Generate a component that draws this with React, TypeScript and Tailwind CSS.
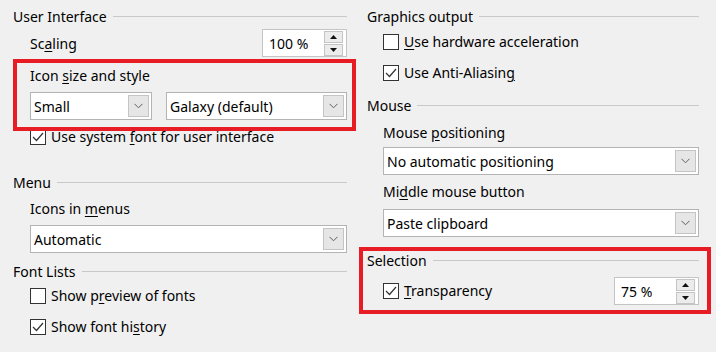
import type { ReactNode } from 'react'

const font = { fontFamily: '"Noto Sans", "Open Sans", sans-serif' }

function Heading({ children, className = '' }: { children: ReactNode; className?: string }) {
  return (
    <div className={`flex items-center h-5 gap-[6px] ${className}`}>
      <span className="text-[14px] text-black leading-5 whitespace-nowrap">{children}</span>
      <div className="flex-1 h-px bg-[#c9c9c9] mt-[-1px]" />
    </div>
  )
}

function Label({ children, className = '' }: { children: ReactNode; className?: string }) {
  return <div className={`h-5 leading-5 text-[14px] text-black ${className}`}>{children}</div>
}

function U({ children }: { children: ReactNode }) {
  return <span className="underline underline-offset-2">{children}</span>
}

function Chevron() {
  return (
    <svg width="9" height="6" viewBox="0 0 9 6" fill="none">
      <path d="M0.5 0.8 L4.5 4.8 L8.5 0.8" stroke="#5f5f5f" strokeWidth="1" />
    </svg>
  )
}

function Select({ value, className = '' }: { value: string; className?: string }) {
  return (
    <div className={`flex items-center h-7 bg-white border border-[#b4b4b4] pl-[3px] pr-[2px] ${className}`}>
      <span className="flex-1 text-[14px] text-black whitespace-nowrap">{value}</span>
      <div className="w-[21px] h-[22px] bg-[#e6e6e6] border border-[#c4c4c4] flex items-center justify-center">
        <Chevron />
      </div>
    </div>
  )
}

function Spin({ value, className = '' }: { value: string; className?: string }) {
  return (
    <div className={`flex items-center h-7 bg-white border border-[#c4c4c4] pl-[6px] pr-[3px] ${className}`}>
      <span className="flex-1 text-[14px] text-black">{value}</span>
      <div className="flex flex-col w-[19px] h-[25px] gap-px">
        <div className="flex-1 bg-[#ececec] border border-[#c4c4c4] flex items-center justify-center">
          <svg width="7" height="4" viewBox="0 0 7 4">
            <path d="M3.5 0 L7 4 L0 4 Z" fill="#111" />
          </svg>
        </div>
        <div className="flex-1 bg-[#ececec] border border-[#c4c4c4] flex items-center justify-center">
          <svg width="7" height="4" viewBox="0 0 7 4">
            <path d="M0 0 L7 0 L3.5 4 Z" fill="#111" />
          </svg>
        </div>
      </div>
    </div>
  )
}

function Check({ checked, children, className = '' }: { checked?: boolean; children: ReactNode; className?: string }) {
  return (
    <div className={`flex items-center h-4 gap-[5px] ${className}`}>
      <div className="w-4 h-4 bg-white border border-[#333] flex items-center justify-center shrink-0">
        {checked && (
          <svg width="12" height="10" viewBox="0 0 12 10" fill="none">
            <path d="M1 5 L4.5 8.5 L11 1" stroke="#333" strokeWidth="1.2" />
          </svg>
        )}
      </div>
      <span className="text-[14px] text-black leading-5 whitespace-nowrap">{children}</span>
    </div>
  )
}

export default function App() {
  return (
    <div className="relative w-[716px] h-[352px] bg-[#f0f0f0] overflow-hidden flex" style={font}>
      {/* Left column */}
      <div className="w-[356px] pl-[13px] pr-[9px] pt-[7px] flex flex-col">
        <Heading>User Interface</Heading>
        <div className="ml-[17px] mt-[2px] flex items-center h-7">
          <span className="flex-1 text-[14px] text-black">Sc<U>a</U>ling</span>
          <Spin value="100 %" className="w-[85px]" />
        </div>
        <Label className="ml-[17px] mt-[9px]">Icon <U>s</U>ize and style</Label>
        <div className="ml-[17px] mt-[6px] flex gap-[14px]">
          <Select value="Small" className="w-[122px]" />
          <Select value="Galaxy (default)" className="w-[181px]" />
        </div>
        <Check checked className="ml-[17px] mt-[9px]">Use system <U>f</U>ont for user interface</Check>

        <Heading className="mt-[28px]">Menu</Heading>
        <Label className="ml-[17px] mt-[6px]">Icons in <U>m</U>enus</Label>
        <Select value="Automatic" className="ml-[17px] mt-[6px] w-[317px]" />

        <Heading className="mt-[9px]">Font Lists</Heading>
        <Check className="ml-[17px] mt-[6px]">Show p<U>r</U>eview of fonts</Check>
        <Check checked className="ml-[17px] mt-[15px]">Show font hi<U>s</U>tory</Check>
      </div>

      {/* Right column */}
      <div className="w-[360px] pl-[11px] pr-[17px] pt-[7px] flex flex-col">
        <Heading>Graphics output</Heading>
        <Check className="ml-[16px] mt-[7px]"><U>U</U>se hardware acceleration</Check>
        <Check checked className="ml-[16px] mt-[15px]">Use Anti-Aliasin<U>g</U></Check>

        <Heading className="mt-[15px]">Mouse</Heading>
        <Label className="ml-[16px] mt-[7px]">Mouse <U>p</U>ositioning</Label>
        <Select value="No automatic positioning" className="ml-[16px] mt-[4px]" />
        <Label className="ml-[16px] mt-[7px]">Mi<U>d</U>dle mouse button</Label>
        <Select value="Paste clipboard" className="ml-[16px] mt-[7px]" />

        <Heading className="mt-[14px]">Selection</Heading>
        <div className="ml-[16px] mt-[6px] flex items-center h-7">
          <div className="flex-1">
            <Check checked><U>T</U>ransparency</Check>
          </div>
          <Spin value="75 %" className="w-[85px]" />
        </div>
      </div>

      {/* Annotation frames */}
      <div className="absolute left-[13px] top-[59px] w-[343px] h-[72px] border-4 border-[#e81c25] pointer-events-none" />
      <div className="absolute left-[359px] top-[247px] w-[352px] h-[67px] border-4 border-[#e81c25] pointer-events-none" />
    </div>
  )
}
